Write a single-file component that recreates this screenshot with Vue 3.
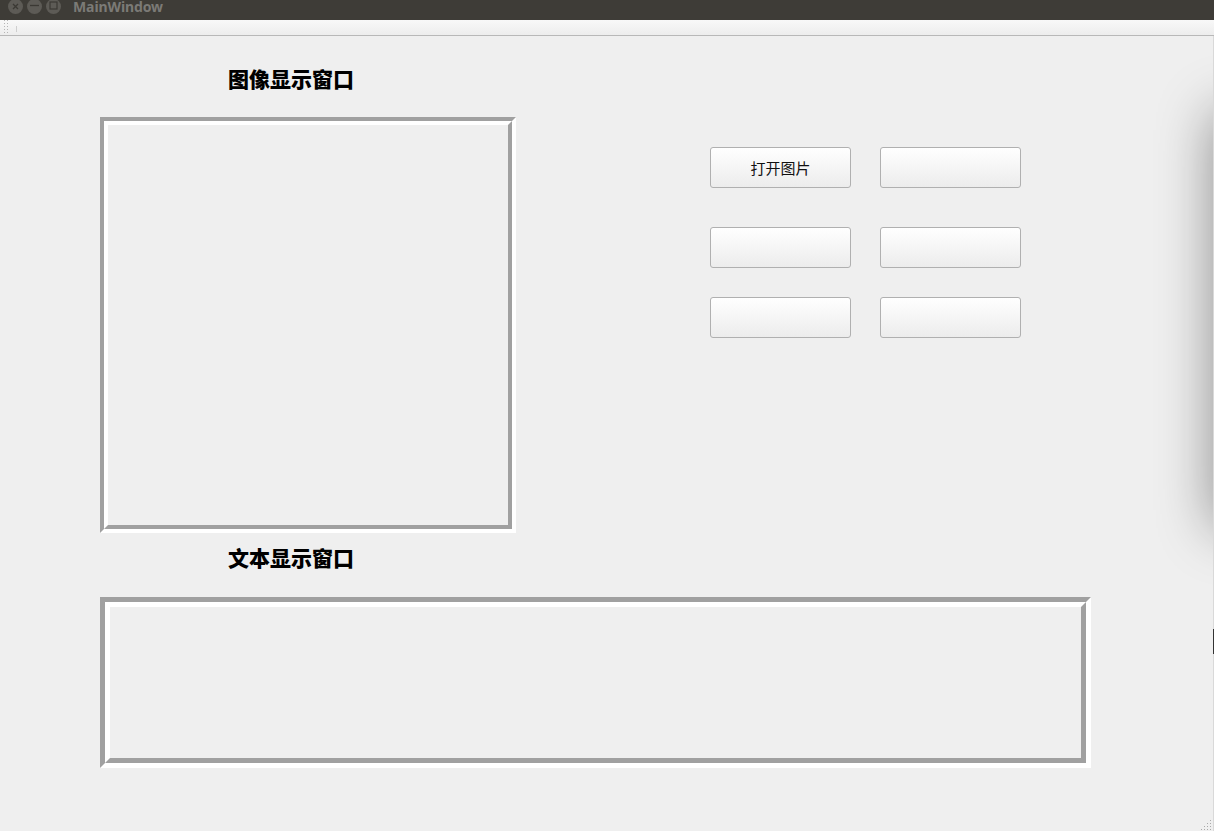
<script setup>
const buttonRows = [
  { cls: 'first', labels: ['打开图片', ''] },
  { cls: 'second', labels: ['', ''] },
  { cls: 'third', labels: ['', ''] },
]
const gripDots = [
  [1210, 820], [1207, 823], [1210, 823], [1204, 826], [1207, 826], [1210, 826],
  [1201, 829], [1204, 829], [1207, 829], [1210, 829],
].map(([x, y]) => ({ x: x - 1196, y: y - 816 }))
</script>

<template>
  <div class="window">
    <header class="titlebar">
      <div class="controls">
        <svg class="ctl" width="15" height="15" viewBox="0 0 15 15"><circle cx="7.5" cy="7.5" r="7.5" fill="#5d5b56"/><path d="M5 5l5 5M10 5l-5 5" stroke="#3b3934" stroke-width="1.3"/></svg>
        <svg class="ctl" width="15" height="15" viewBox="0 0 15 15"><circle cx="7.5" cy="7.5" r="7.5" fill="#5d5b56"/><path d="M3 6.5h9" stroke="#3b3934" stroke-width="1.3"/></svg>
        <svg class="ctl" width="15" height="15" viewBox="0 0 15 15"><circle cx="7.5" cy="7.5" r="7.5" fill="#5d5b56"/><rect x="4" y="3" width="7" height="7" fill="none" stroke="#3b3934" stroke-width="1.2"/></svg>
      </div>
      <span class="title">MainWindow</span>
    </header>

    <div class="toolbar">
      <span class="grip"></span>
      <span class="sep"></span>
    </div>

    <main class="content">
      <div class="top">
        <section class="left">
          <h2 class="label">图像显示窗口</h2>
          <div class="frame image-frame"><div class="frame-inner"></div></div>
        </section>
        <section class="buttons">
          <div v-for="row in buttonRows" :key="row.cls" class="btn-row" :class="row.cls">
            <button v-for="(text, i) in row.labels" :key="i" class="btn">{{ text }}</button>
          </div>
        </section>
      </div>
      <h2 class="label lower">文本显示窗口</h2>
      <div class="frame text-frame"><div class="frame-inner"></div></div>
    </main>

    <div class="side-shadow"></div>
    <div class="edge"></div>
    <div class="edge-mark"></div>
    <svg class="resize" width="18" height="15" viewBox="0 0 18 15">
      <rect v-for="(d, i) in gripDots" :key="i" :x="d.x" :y="d.y" width="1" height="1" fill="#a9a9a9" />
    </svg>
  </div>
</template>

<style>
html, body { margin: 0; background: #efefef; }
</style>

<style scoped>
.window {
  position: relative;
  width: 1214px;
  height: 831px;
  overflow: hidden;
  background: #efefef;
  display: flex;
  flex-direction: column;
  font-family: "Noto Sans CJK SC", "Noto Sans", sans-serif;
}
.titlebar {
  height: 20px;
  flex: none;
  background: #3e3c37;
  display: flex;
  align-items: flex-start;
  padding-left: 8px;
  box-sizing: border-box;
}
.controls {
  display: flex;
  gap: 4px;
  margin-top: -1px;
}
.ctl { display: block; }
.title {
  margin-left: 12px;
  font-family: "Noto Sans", sans-serif;
  font-size: 14px;
  font-weight: 700;
  line-height: 14px;
  letter-spacing: -0.1px;
  color: #7b7a76;
}
.toolbar {
  height: 16px;
  flex: none;
  box-sizing: border-box;
  background: linear-gradient(#f8f8f8, #ededed);
  border-bottom: 1px solid #b8b8b8;
  display: flex;
  align-items: flex-start;
  padding-left: 4px;
}
.grip {
  width: 5px;
  height: 15px;
  background-image: radial-gradient(circle at 0.5px 0.5px, #b5b5b5 0.7px, transparent 0.8px);
  background-size: 3px 3px;
}
.sep {
  width: 1px;
  height: 6px;
  margin: 6px 0 0 7px;
  background: #cfcfcf;
}
.content {
  flex: 1;
  padding: 27px 0 0 100px;
  box-sizing: border-box;
}
.top { display: flex; }
.left { width: 416px; flex: none; }
.label {
  margin: 0;
  padding-left: 128px;
  height: 30px;
  font-size: 21px;
  line-height: 30px;
  font-weight: 900;
  color: #000;
  white-space: nowrap;
}
.lower { margin-top: 9px; }
.frame {
  box-sizing: border-box;
  border-style: solid;
  border-color: #a0a0a0 #ffffff #ffffff #a0a0a0;
}
.frame-inner {
  box-sizing: border-box;
  width: 100%;
  height: 100%;
  border-style: solid;
  border-color: #ffffff #a0a0a0 #a0a0a0 #ffffff;
}
.image-frame {
  width: 416px;
  height: 416px;
  margin-top: 24px;
  border-width: 4px;
}
.image-frame .frame-inner { border-width: 4px; }
.text-frame {
  width: 991px;
  height: 171px;
  margin-top: 25px;
  border-width: 5px;
}
.text-frame .frame-inner { border-width: 5px; }
.buttons {
  margin-left: 194px;
  display: flex;
  flex-direction: column;
}
.btn-row {
  display: flex;
  gap: 29px;
}
.btn-row.first { margin-top: 84px; }
.btn-row.second { margin-top: 39px; }
.btn-row.third { margin-top: 29px; }
.btn {
  width: 141px;
  height: 41px;
  box-sizing: border-box;
  padding: 0;
  border: 1px solid #b0b0b0;
  border-radius: 3px;
  background: linear-gradient(#ffffff, #ececec);
  font-family: "Noto Sans CJK SC", sans-serif;
  font-size: 15px;
  color: #111111;
  line-height: 39px;
}
.side-shadow {
  position: absolute;
  left: 1222px;
  top: 120px;
  width: 60px;
  height: 400px;
  box-shadow: 0 0 55px 8px rgba(0, 0, 0, 0.42);
}
.edge {
  position: absolute;
  right: 0;
  top: 36px;
  bottom: 0;
  width: 1px;
  background: #d9d9d9;
}
.edge-mark {
  position: absolute;
  right: 0;
  top: 629px;
  width: 1px;
  height: 25px;
  background: #333333;
}
.resize {
  position: absolute;
  right: 0;
  bottom: 0;
}
</style>
